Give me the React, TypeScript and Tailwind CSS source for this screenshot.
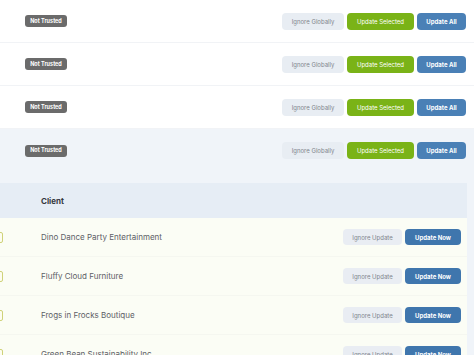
import React from "react";

const font = { fontFamily: "Inter, 'Noto Sans', sans-serif" };

function Badge() {
  return (
    <span className="inline-flex h-[12px] w-[42px] items-center justify-center rounded-[3px] bg-[#6b6b6b] text-[5.5px] font-bold text-white">
      Not Trusted
    </span>
  );
}

function TopButtons() {
  return (
    <div className="flex items-center gap-[2px]">
      <button className="flex h-[17px] w-[62px] items-center justify-center rounded-[4px] bg-[#e8edf3] text-[6px] text-[#80858d]">
        Ignore Globally
      </button>
      <button className="ml-[1px] flex h-[17px] w-[67px] items-center justify-center rounded-[4px] bg-[#7ab317] text-[6px] text-white">
        Update Selected
      </button>
      <button className="ml-[1px] flex h-[17px] w-[49px] items-center justify-center rounded-[4px] bg-[#4a80b6] text-[6px] font-bold text-white">
        Update All
      </button>
    </div>
  );
}

function TopRow({ last }: { last?: boolean }) {
  return (
    <div
      className={`flex h-[43px] items-center justify-between pl-[25px] pr-[8px] ${
        last ? "" : "border-b border-[#f1f3f6]"
      }`}
    >
      <Badge />
      <TopButtons />
    </div>
  );
}

function ClientRow({ name }: { name: string }) {
  return (
    <div className="flex h-[39px] items-center border-b border-[#f5f7f0] pr-[6px]">
      <span className="ml-[-8px] h-[11px] w-[11px] shrink-0 rounded-[2px] border border-[#cfd27a] bg-[#fdfdf0]" />
      <span className="ml-[38px] flex-1 text-[8px] text-[#5d6066]">{name}</span>
      <div className="flex items-center gap-[3px]">
        <button className="flex h-[16px] w-[59px] items-center justify-center rounded-[4px] bg-[#e9edf3] text-[6px] text-[#80858d]">
          Ignore Update
        </button>
        <button className="flex h-[16px] w-[56px] items-center justify-center rounded-[4px] bg-[#3f76ad] text-[6px] font-bold text-white">
          Update Now
        </button>
      </div>
    </div>
  );
}

export default function App() {
  return (
    <div className="h-[355px] w-[474px] overflow-hidden bg-white" style={font}>
      <TopRow />
      <TopRow />
      <TopRow />
      <div className="bg-[#f0f4f9]">
        <TopRow last />
        <div className="mt-[11px] mr-[7px] overflow-hidden">
          <div className="flex h-[35px] items-center bg-[#e6edf5] pl-[41px] text-[8px] font-bold text-[#35383d]">
            Client
          </div>
          <div className="bg-[#fbfdf5]">
            <ClientRow name="Dino Dance Party Entertainment" />
            <ClientRow name="Fluffy Cloud Furniture" />
            <ClientRow name="Frogs in Frocks Boutique" />
            <ClientRow name="Green Bean Sustainability Inc" />
          </div>
        </div>
      </div>
    </div>
  );
}
